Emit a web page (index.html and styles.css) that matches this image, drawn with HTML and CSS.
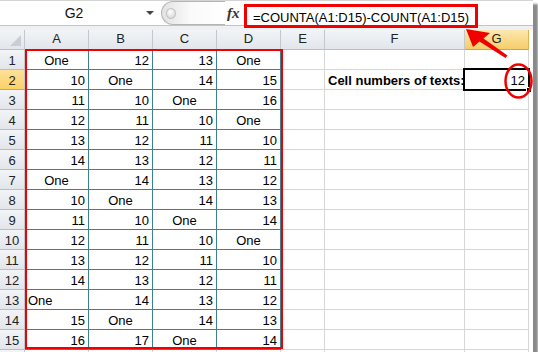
FILE: index.html
```html
<!DOCTYPE html>
<html lang="en">
<head>
  <meta charset="UTF-8">
  <title>Count text cells</title>
  <link rel="stylesheet" href="styles.css">
</head>
<body>

  <div class="window">
    <div class="formula-bar">
      <div class="name-box"><span class="label">G2</span><span class="caret"></span></div>
      <div class="splitter"><span class="knob"></span></div>
      <div class="fx">fx</div>
      <div class="formula">=COUNTA(A1:D15)-COUNT(A1:D15)</div>
    </div>

    <div class="sheet">
      <div class="ch corner"><span class="tri"></span></div>
      <div class="ch">A</div><div class="ch">B</div><div class="ch">C</div><div class="ch">D</div>
      <div class="ch">E</div><div class="ch">F</div><div class="ch on">G</div>

      <div class="rh">1</div>
      <div class="c t">One</div><div class="c n">12</div><div class="c n">13</div><div class="c t">One</div>
      <div class="g"></div><div class="g"></div><div class="g"></div>

      <div class="rh on">2</div>
      <div class="c n">10</div><div class="c t">One</div><div class="c n">14</div><div class="c n">15</div>
      <div class="g"></div><div class="g label-cell">Cell numbers of texts:</div><div class="g n">12</div>

      <div class="rh">3</div>
      <div class="c n">11</div><div class="c n">10</div><div class="c t">One</div><div class="c n">16</div>
      <div class="g"></div><div class="g"></div><div class="g"></div>

      <div class="rh">4</div>
      <div class="c n">12</div><div class="c n">11</div><div class="c n">10</div><div class="c t">One</div>
      <div class="g"></div><div class="g"></div><div class="g"></div>

      <div class="rh">5</div>
      <div class="c n">13</div><div class="c n">12</div><div class="c n">11</div><div class="c n">10</div>
      <div class="g"></div><div class="g"></div><div class="g"></div>

      <div class="rh">6</div>
      <div class="c n">14</div><div class="c n">13</div><div class="c n">12</div><div class="c n">11</div>
      <div class="g"></div><div class="g"></div><div class="g"></div>

      <div class="rh">7</div>
      <div class="c t">One</div><div class="c n">14</div><div class="c n">13</div><div class="c n">12</div>
      <div class="g"></div><div class="g"></div><div class="g"></div>

      <div class="rh">8</div>
      <div class="c n">10</div><div class="c t">One</div><div class="c n">14</div><div class="c n">13</div>
      <div class="g"></div><div class="g"></div><div class="g"></div>

      <div class="rh">9</div>
      <div class="c n">11</div><div class="c n">10</div><div class="c t">One</div><div class="c n">14</div>
      <div class="g"></div><div class="g"></div><div class="g"></div>

      <div class="rh">10</div>
      <div class="c n">12</div><div class="c n">11</div><div class="c n">10</div><div class="c t">One</div>
      <div class="g"></div><div class="g"></div><div class="g"></div>

      <div class="rh">11</div>
      <div class="c n">13</div><div class="c n">12</div><div class="c n">11</div><div class="c n">10</div>
      <div class="g"></div><div class="g"></div><div class="g"></div>

      <div class="rh">12</div>
      <div class="c n">14</div><div class="c n">13</div><div class="c n">12</div><div class="c n">11</div>
      <div class="g"></div><div class="g"></div><div class="g"></div>

      <div class="rh">13</div>
      <div class="c tl">One</div><div class="c n">14</div><div class="c n">13</div><div class="c n">12</div>
      <div class="g"></div><div class="g"></div><div class="g"></div>

      <div class="rh">14</div>
      <div class="c n">15</div><div class="c t">One</div><div class="c n">14</div><div class="c n">13</div>
      <div class="g"></div><div class="g"></div><div class="g"></div>

      <div class="rh">15</div>
      <div class="c n">16</div><div class="c n">17</div><div class="c t">One</div><div class="c n">14</div>
      <div class="g"></div><div class="g"></div><div class="g"></div>

      <div class="rh"></div>
      <div class="g"></div><div class="g"></div><div class="g"></div><div class="g"></div>
      <div class="g"></div><div class="g"></div><div class="g"></div>
    </div>

    <!-- annotations drawn over the sheet -->
    <div class="range"></div>
    <div class="sel"><span class="handle"></span></div>
    <svg class="notes" width="533" height="352" viewBox="0 0 533 352">
      <polygon points="466,29 490,33 483.5,38.5 507.5,55.5 505.5,58 479.5,41.5 473,47" fill="#f00000"/>
      <ellipse cx="518.5" cy="81" rx="13" ry="16.5" fill="none" stroke="#f00000" stroke-width="2.5"/>
    </svg>
  </div>

</body>
</html>
```

FILE: styles.css
```css
* {
  box-sizing: border-box;
}

body {
  margin: 0;
  background: #fff;
  font-family: "Liberation Sans", Arial, sans-serif;
}

.window {
  position: relative;
  width: 533px;
  height: 352px;
  overflow: hidden;
  background: #fff;
  box-shadow: 5px 4px 2px #8a8a8a;
}

/* formula bar */

.formula-bar {
  display: flex;
  align-items: flex-start;
  height: 30px;
  background: linear-gradient(#d4d4d4 0 1px, #fff 1px 25px, #c4c4c4 25px 26px, #eef0f3 26px);
}

.name-box {
  display: flex;
  align-items: center;
  width: 160px;
  height: 24px;
  margin-top: 1px;
  font-size: 14px;
  color: #111;
}

.name-box .label {
  flex: 1;
  text-align: center;
  padding-left: 2px;
}

.caret {
  width: 0;
  height: 0;
  margin-right: 6px;
  border-left: 4px solid transparent;
  border-right: 4px solid transparent;
  border-top: 4px solid #444;
}

.splitter {
  display: flex;
  align-items: center;
  width: 64px;
  height: 24px;
  margin-top: 1px;
  margin-left: 1px;
  border: 1px solid #b4b4b4;
  border-right: none;
  border-radius: 12px 0 0 12px;
  background: linear-gradient(to right, #e2e2e2, #fafafa 45%, #fff);
}

.knob {
  width: 10px;
  height: 11px;
  margin-left: 4px;
  border-radius: 50%;
  border: 1px solid #c2c2c2;
  background: radial-gradient(circle at 40% 35%, #fff, #cfcfcf);
}

.fx {
  width: 16px;
  margin-left: 2px;
  margin-top: 5px;
  font-family: "Liberation Serif", serif;
  font-style: italic;
  font-weight: bold;
  font-size: 15px;
  color: #333;
}

.formula {
  width: 234px;
  height: 24px;
  margin-top: 4px;
  margin-left: 1px;
  padding: 3px 0 0 6px;
  border: 3px solid #f00000;
  background: #fff;
  font-size: 13px;
  line-height: 15px;
  color: #000;
  white-space: nowrap;
}

/* grid */

.sheet {
  display: grid;
  grid-template-columns: 25px 64px 64px 64px 64px 44px 140px 64px;
  grid-auto-rows: 20px;
  width: 529px;
}

.sheet > div {
  padding: 3px 3px 0;
  font-size: 13px;
  line-height: 16px;
  white-space: nowrap;
  color: #000;
}

.ch,
.rh {
  text-align: center;
  color: #222 !important;
  background: linear-gradient(#f2f4f7, #e2e6eb);
  border-right: 1px solid #c3c8cf;
  border-bottom: 1px solid #b8bec6;
}

.sheet > .ch {
  padding: 1px 0 0;
}

.sheet > .rh {
  padding: 3px 0 0;
}

.ch.on {
  background: linear-gradient(#fce8b0, #f6cd68);
  border-right-color: #e2b24f;
  border-bottom-color: #d9a33c;
}

.rh.on {
  background: linear-gradient(#fde19a, #fbd167);
  border-bottom-color: #d9a33c;
}

.corner {
  position: relative;
}

.tri {
  position: absolute;
  right: 3px;
  bottom: 3px;
  width: 0;
  height: 0;
  border-left: 11px solid transparent;
  border-bottom: 11px solid #c9ced5;
}

.c {
  border-right: 1px solid #3d7f93;
  border-bottom: 1px solid #3d7f93;
}

.g {
  border-right: 1px solid #d6d6d6;
  border-bottom: 1px solid #d6d6d6;
}

.n {
  text-align: right;
}

.t {
  text-align: center;
}

.tl {
  text-align: left;
}

.sheet > .label-cell {
  padding-right: 1px;
  text-align: right;
  font-weight: bold;
}

/* overlays */

.range {
  position: absolute;
  left: 25px;
  top: 49px;
  width: 258px;
  height: 300px;
  border: 2px solid #f00000;
}

.sel {
  position: absolute;
  left: 463px;
  top: 68px;
  width: 67px;
  height: 23px;
  border: 2px solid #000;
}

.handle {
  position: absolute;
  right: -4px;
  bottom: -4px;
  width: 6px;
  height: 6px;
  background: #000;
  border: 1px solid #fff;
}

.notes {
  position: absolute;
  left: 0;
  top: 0;
  pointer-events: none;
}
```
